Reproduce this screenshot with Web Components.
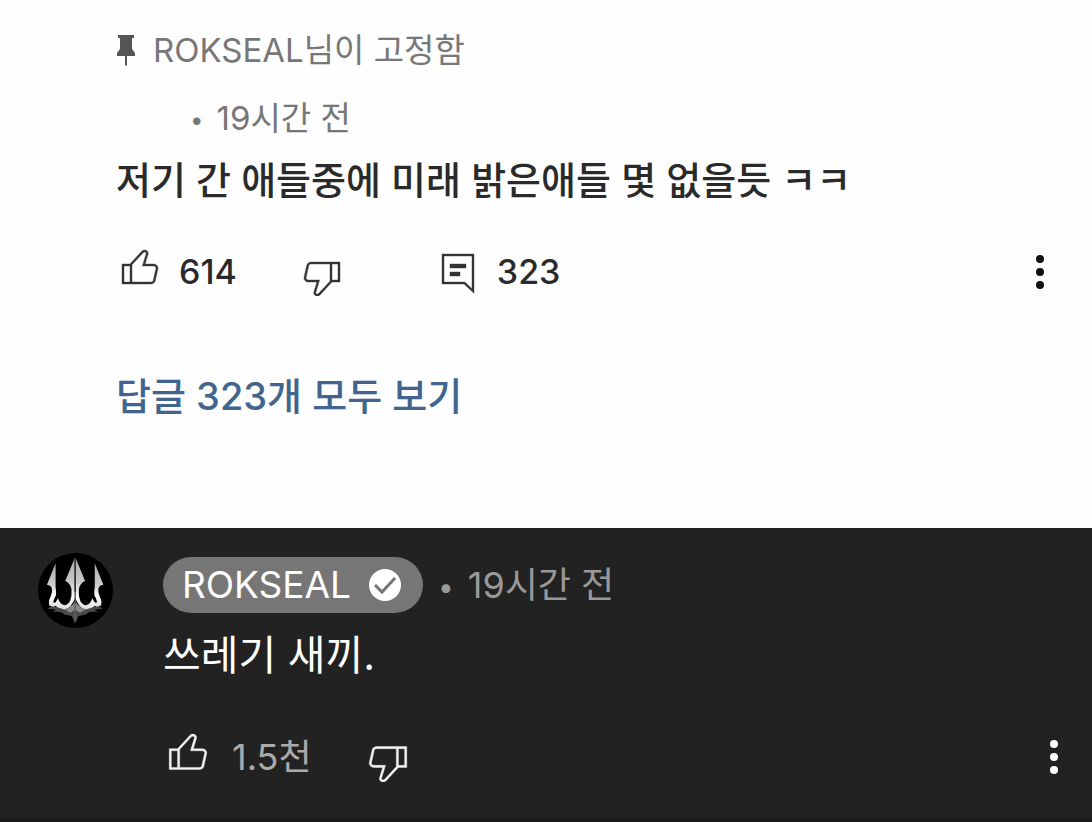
<!DOCTYPE html>
<html lang="ko">
<head>
<meta charset="utf-8">
<meta name="viewport" content="width=device-width, initial-scale=1">
<title>댓글</title>
<style>
    body {
        margin: 0;
        min-height: 100vh;
        display: flex;
        flex-direction: column;
        background: #222;
        font-family: Inter, "Noto Sans CJK KR", sans-serif;
    }
    reply-card { flex: 1; }
</style>
</head>
<body>
<pinned-comment>
    <span slot="pin">ROKSEAL님이 고정함</span>
    <comment-meta slot="meta">19시간 전</comment-meta>
    저기 간 애들중에 미래 밝은애들 몇 없을듯 ㅋㅋ
    <action-button slot="actions" icon="like" label="좋아요">614</action-button>
    <action-button slot="actions" icon="dislike" label="싫어요"></action-button>
    <action-button slot="actions" class="reply" icon="reply" label="답글">323</action-button>
    <a slot="replies" href="#replies">답글 323개 모두 보기</a>
</pinned-comment>
<reply-card id="replies">
    <author-badge slot="author">ROKSEAL</author-badge>
    <comment-meta slot="meta">19시간 전</comment-meta>
    쓰레기 새끼.
    <action-button slot="actions" icon="like" label="좋아요">1.5천</action-button>
    <action-button slot="actions" icon="dislike" label="싫어요"></action-button>
</reply-card>

<script>
const THUMB = 'M18.77 11h-4.23l1.52-4.94C16.38 5.03 15.54 4 14.38 4c-.58 0-1.14.24-1.52.65L7 11H3v10h14.43c1.06 0 1.98-.67 2.19-1.61l1.34-6C21.23 12.15 20.18 11 18.77 11zM7 20H4v-8h3v8zm12.98-6.83-1.34 6c-.1.48-.61.83-1.21.83H8v-8.61l5.6-6.06c.19-.21.48-.33.78-.33.26 0 .5.11.63.3.07.1.15.26.09.47l-1.52 4.94-.4 1.29h5.58c.41 0 .8.17 1.03.46.13.15.26.4.19.71z';

// the two thumbs sit above and below the middle of the row
const ICONS = {
    like: `<svg viewBox="0 3 24 24"><path d="${THUMB}"/></svg>`,
    dislike: `<svg viewBox="0 -4 24 24"><path transform="rotate(180 12 12)" d="${THUMB}"/></svg>`,
    reply: `<svg viewBox="0 -1 24 24"><path d="M8 7h8v2H8zM8 11h5v2H8zM4 2h16v19.6L15 17H4zM5 3v13h10.4l3.6 3.4V3z" fill-rule="evenodd"/></svg>`
};

class ActionButton extends HTMLElement {
    constructor() {
        super();
        this.attachShadow({ mode: 'open' });
    }

    connectedCallback() {
        this.shadowRoot.innerHTML = `
            <style>
                :host { display: block; }
                button {
                    display: flex;
                    align-items: center;
                    gap: var(--count-gap, 15px);
                    padding: 0;
                    border: 0;
                    background: none;
                    color: var(--count-color, #2a2a2a);
                    font: inherit;
                    line-height: 48px;
                    cursor: pointer;
                }
                svg {
                    display: block;
                    width: var(--icon-size, 48px);
                    height: var(--icon-size, 48px);
                    fill: var(--icon-color, #333);
                    stroke: var(--icon-color, #333);
                    stroke-width: 0.2;
                }
            </style>
            <button type="button" aria-label="${this.getAttribute('label')}">
                ${ICONS[this.getAttribute('icon')]}
                ${this.textContent.trim() ? '<slot></slot>' : ''}
            </button>
        `;
    }
}

class MenuButton extends HTMLElement {
    constructor() {
        super();
        this.attachShadow({ mode: 'open' });
        this.shadowRoot.innerHTML = `
            <style>
                :host { display: block; margin-left: auto; }
                button { display: block; padding: 0; border: 0; background: none; cursor: pointer; }
                svg { display: block; height: 48px; width: 24px; fill: var(--menu-color, #111); }
            </style>
            <button type="button" aria-label="메뉴">
                <svg viewBox="0 0 24 48">
                    <circle cx="12" cy="11" r="4"/>
                    <circle cx="12" cy="24" r="4"/>
                    <circle cx="12" cy="37" r="4"/>
                </svg>
            </button>
        `;
    }
}

class CommentMeta extends HTMLElement {
    constructor() {
        super();
        this.attachShadow({ mode: 'open' });
        this.shadowRoot.innerHTML = `
            <style>
                :host { display: flex; align-items: center; gap: var(--dot-gap, 13px); }
                .dot { font-size: var(--dot-size, 24px); line-height: 1; padding-top: 4px; }
            </style>
            <span class="dot">•</span>
            <span><slot></slot></span>
        `;
    }
}

class AuthorBadge extends HTMLElement {
    constructor() {
        super();
        this.attachShadow({ mode: 'open' });
        this.shadowRoot.innerHTML = `
            <style>
                :host {
                    display: flex;
                    align-items: center;
                    gap: 18px;
                    padding: 0 22px 0 19px;
                    border-radius: 28px;
                    background: #767676;
                    color: #fff;
                    font-size: 37px;
                    line-height: 56px;
                }
                svg { display: block; width: 32px; height: 32px; }
            </style>
            <span><slot></slot></span>
            <svg viewBox="0 0 32 32" role="img" aria-label="인증됨">
                <circle cx="16" cy="16" r="16" fill="#fff"/>
                <path d="M6 16l7 7L26 9" fill="none" stroke="#767676" stroke-width="3"/>
            </svg>
        `;
    }
}

class TridentAvatar extends HTMLElement {
    constructor() {
        super();
        this.attachShadow({ mode: 'open' });
        this.shadowRoot.innerHTML = `
            <style>
                :host { display: block; width: 75px; }
                svg { display: block; width: 100%; }
            </style>
            <svg viewBox="0 0 226 226" role="img" aria-label="ROKSEAL">
                <defs>
                    <linearGradient id="steel" x1="0" y1="0" x2="0" y2="1">
                        <stop offset="0" stop-color="#aaa"/>
                        <stop offset="0.5" stop-color="#ccc"/>
                        <stop offset="0.75" stop-color="#fff"/>
                        <stop offset="1" stop-color="#ddd"/>
                    </linearGradient>
                    <g id="half">
                        <path fill="#4a4a4a" d="M28 168l14-8 38 8 32-16v60l-10-22-20-4-14-8-24-2 10-6z"/>
                        <path fill="#888" d="M82 170q20-6 29-24v26l-14 8z"/>
                        <path fill="url(#steel)" d="M111 14L82 84Q98 90 101 110Q103 130 96 146Q88 158 78 157Q66 153 60 136L54 148L44 154L60 164L80 170Q102 164 111 136Z"/>
                        <path fill="url(#steel)" d="M53 31L27 96Q40 98 42 108Q44 118 38 132Q30 146 34 158L48 162L56 156L46 148Q48 136 54 128Q56 116 53 104Z"/>
                    </g>
                </defs>
                <circle cx="113" cy="113" r="113" fill="#000"/>
                <use href="#half"/>
                <use href="#half" transform="matrix(-1 0 0 1 224 0)"/>
                <path d="M112 18v100" stroke="#333" stroke-width="5"/>
                <path d="M112 118v90" stroke="#666" stroke-width="4"/>
            </svg>
        `;
    }
}

class PinnedComment extends HTMLElement {
    constructor() {
        super();
        this.attachShadow({ mode: 'open' });
        this.shadowRoot.innerHTML = `
            <style>
                :host {
                    display: block;
                    padding: 26px 40px 108px 116px;
                    background: #fefefe;
                    color: #777;
                    font-size: 33px;
                    line-height: 48px;
                }
                .pin { display: flex; align-items: center; gap: 17px; }
                .pin svg { width: 20px; height: 32px; fill: #555; }
                .meta { display: flex; margin-top: 20px; }
                .author { width: 74px; }
                .text { margin: 10px 0 40px; color: #2a2a2a; font-size: 38px; font-weight: 500; line-height: 56px; }
                .actions { display: flex; align-items: center; gap: 61px; font-size: 34px; font-weight: 500; }
                ::slotted(.reply) { margin-left: 27px; }
                .replies { margin-top: 76px; font-size: 38px; font-weight: 500; }
                ::slotted(a) { color: #41658f; text-decoration: none; }
            </style>
            <div class="pin">
                <svg viewBox="0 0 20 32"><path d="M2 1h16v3h-2v11l3 4v3h-8v9l-1 1-1-1v-9H1v-3l3-4V4H2z"/></svg>
                <slot name="pin"></slot>
            </div>
            <div class="meta"><div class="author"></div><slot name="meta"></slot></div>
            <div class="text"><slot></slot></div>
            <div class="actions"><slot name="actions"></slot><menu-button></menu-button></div>
            <div class="replies"><slot name="replies"></slot></div>
        `;
    }
}

class ReplyCard extends HTMLElement {
    constructor() {
        super();
        this.attachShadow({ mode: 'open' });
        this.shadowRoot.innerHTML = `
            <style>
                :host {
                    --icon-size: 50px;
                    --icon-color: #f4f4f4;
                    --count-color: #aaa;
                    --count-gap: 19px;
                    --dot-size: 28px;
                    --dot-gap: 14px;
                    --menu-color: #fff;
                    box-sizing: border-box;
                    display: flex;
                    gap: 50px;
                    padding: 25px 26px 36px 38px;
                    border-bottom: 4px solid #1a1a1a;
                    background: #222;
                    color: #999;
                    font-size: 36px;
                    line-height: 56px;
                }
                .body { flex: 1; padding-top: 4px; }
                .head { display: flex; align-items: center; gap: 15px; }
                .text { margin: 14px 0 49px; color: #fff; font-size: 41px; }
                .actions { display: flex; align-items: center; gap: 51px; }
            </style>
            <trident-avatar></trident-avatar>
            <div class="body">
                <div class="head"><slot name="author"></slot><slot name="meta"></slot></div>
                <div class="text"><slot></slot></div>
                <div class="actions"><slot name="actions"></slot><menu-button></menu-button></div>
            </div>
        `;
    }
}

customElements.define('action-button', ActionButton);
customElements.define('menu-button', MenuButton);
customElements.define('comment-meta', CommentMeta);
customElements.define('author-badge', AuthorBadge);
customElements.define('trident-avatar', TridentAvatar);
customElements.define('pinned-comment', PinnedComment);
customElements.define('reply-card', ReplyCard);
</script>
</body>
</html>
